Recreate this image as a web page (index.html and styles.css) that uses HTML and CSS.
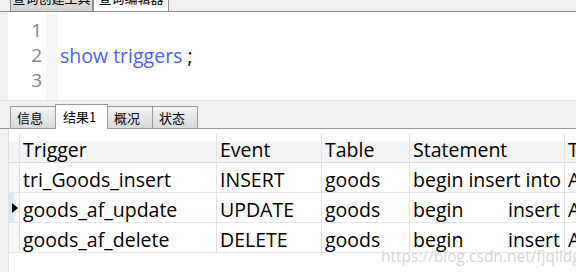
FILE: index.html
```html
<!DOCTYPE html>
<html lang="zh-CN">
<head>
  <meta charset="utf-8">
  <title>查询编辑器</title>
  <link rel="stylesheet" href="styles.css">
</head>
<body>
  <div class="doc-tabs">
    <div class="doc-tab">查询创建工具</div>
    <div class="doc-tab active">查询编辑器</div>
  </div>

  <div class="editor">
    <div class="line-nos">
      <div>1</div>
      <div>2</div>
      <div>3</div>
    </div>
    <div class="fold"></div>
    <div class="code">
      <div>&nbsp;</div>
      <div><span class="kw">show triggers</span> ;</div>
      <div>&nbsp;</div>
    </div>
  </div>

  <div class="split"></div>

  <div class="result-tabs">
    <div class="res-tab">信息</div>
    <div class="res-tab active">结果1</div>
    <div class="res-tab">概况</div>
    <div class="res-tab">状态</div>
  </div>

  <div class="grid-pane">
    <div class="side"></div>
    <div class="grid-area">
      <div class="grid">
        <div class="cell head marker"></div>
        <div class="cell head">Trigger</div>
        <div class="cell head">Event</div>
        <div class="cell head">Table</div>
        <div class="cell head">Statement</div>
        <div class="cell head last">Timing</div>

        <div class="cell marker"></div>
        <div class="cell">tri_Goods_insert</div>
        <div class="cell">INSERT</div>
        <div class="cell">goods</div>
        <div class="cell">begin insert into</div>
        <div class="cell last">AFTER</div>

        <div class="cell marker current"><span class="arrow"></span></div>
        <div class="cell">goods_af_update</div>
        <div class="cell">UPDATE</div>
        <div class="cell">goods</div>
        <div class="cell"><span>begin</span><span class="push">insert</span></div>
        <div class="cell last">AFTER</div>

        <div class="cell marker"></div>
        <div class="cell">goods_af_delete</div>
        <div class="cell">DELETE</div>
        <div class="cell">goods</div>
        <div class="cell"><span>begin</span><span class="push">insert</span></div>
        <div class="cell last">AFTER</div>
      </div>
    </div>
  </div>

  <div class="watermark">https://blog.csdn.net/fjqlldg</div>
</body>
</html>
```

FILE: styles.css
```css
* {
  margin: 0;
  padding: 0;
  box-sizing: border-box;
}

body {
  width: 576px;
  height: 272px;
  overflow: hidden;
  position: relative;
  background: #f0f0f0;
  font-family: "Open Sans", "Noto Sans CJK SC", sans-serif;
  color: #000;
}

/* top document tabs, mostly scrolled off */
.doc-tabs {
  height: 12px;
  display: flex;
  align-items: flex-end;
  padding-left: 10px;
  border-bottom: 1px solid #8e8e8e;
  overflow: hidden;
}

.doc-tab {
  height: 24px;
  width: 83px;
  border: 1px solid #8e8e8e;
  border-bottom: none;
  background: linear-gradient(#f2f2f2, #d2d2d2);
  font-family: "Noto Sans CJK SC", sans-serif;
  font-size: 13px;
  line-height: 20px;
  text-align: center;
}

.doc-tab.active {
  width: 76px;
  height: 25px;
  margin-bottom: -1px;
  background: #fff;
}

/* sql editor */
.editor {
  height: 88px;
  margin-left: 8px;
  background: #fff;
  display: flex;
}

.line-nos {
  width: 34px;
  padding-top: 6px;
  text-align: right;
  color: #858585;
  font-size: 19px;
  line-height: 25px;
}

.fold {
  width: 12px;
  margin-left: 4px;
  background: #f7f7f7;
}

.code {
  padding-top: 6px;
  padding-left: 2px;
  font-size: 19.5px;
  line-height: 25px;
}

.kw {
  color: #4a62f2;
}

.split {
  height: 4px;
  border-top: 1px solid #e4e4e4;
}

/* result tabs */
.result-tabs {
  height: 25px;
  display: flex;
  align-items: flex-end;
  padding-left: 10px;
  border-bottom: 1px solid #9a9a9a;
}

.res-tab {
  width: 46px;
  height: 22px;
  padding-left: 6px;
  border: 1px solid #9a9a9a;
  border-bottom: none;
  background: linear-gradient(#f4f4f4, #d9d9d9);
  font-family: "Noto Sans CJK SC", sans-serif;
  font-size: 13px;
  line-height: 22px;
}

.res-tab + .res-tab {
  margin-left: -1px;
}

.res-tab.active {
  width: 53px;
  height: 25px;
  margin-bottom: -1px;
  padding-left: 7px;
  background: #fff;
  line-height: 24px;
}

/* result grid */
.grid-pane {
  height: 143px;
  display: flex;
}

.side {
  width: 8px;
}

.grid-area {
  flex: 1;
  background: #fff;
  border-left: 1px solid #dedede;
  padding-top: 5px;
  overflow: hidden;
}

.grid {
  display: grid;
  grid-template-columns: 11px 197px 105px 88px 155px 1fr;
  grid-template-rows: 29px repeat(3, 30px);
}

.cell {
  display: flex;
  align-items: center;
  padding-left: 3px;
  padding-top: 3px;
  border-right: 1px solid #e2e2e2;
  border-bottom: 1px solid #e6e6e6;
  font-size: 19.5px;
  white-space: nowrap;
  overflow: hidden;
}

.cell.last {
  border-right: none;
}

.cell.head {
  background: linear-gradient(#fff 0, #fff 7px, #f3f3f3 8px, #f3f3f3 100%);
  border-bottom-color: #dadada;
  padding-top: 2px;
  padding-bottom: 0;
}

.cell.marker {
  padding: 0;
  background: #f7f7f7;
}

.cell.marker.head {
  background: linear-gradient(#fff 0, #fff 7px, #f3f3f3 8px, #f3f3f3 100%);
}

.cell.marker.current {
  background: linear-gradient(to right, #d6e9fb 0, #d6e9fb 5px, #f7f7f7 5px);
}

.arrow {
  margin-left: 3px;
  width: 0;
  height: 0;
  border-top: 5px solid transparent;
  border-bottom: 5px solid transparent;
  border-left: 6px solid #000;
}

.push {
  margin-left: auto;
  padding-right: 4px;
}

.watermark {
  position: absolute;
  left: 381px;
  top: 245px;
  font-size: 15.5px;
  color: #d6d6d6;
  white-space: nowrap;
}
```
